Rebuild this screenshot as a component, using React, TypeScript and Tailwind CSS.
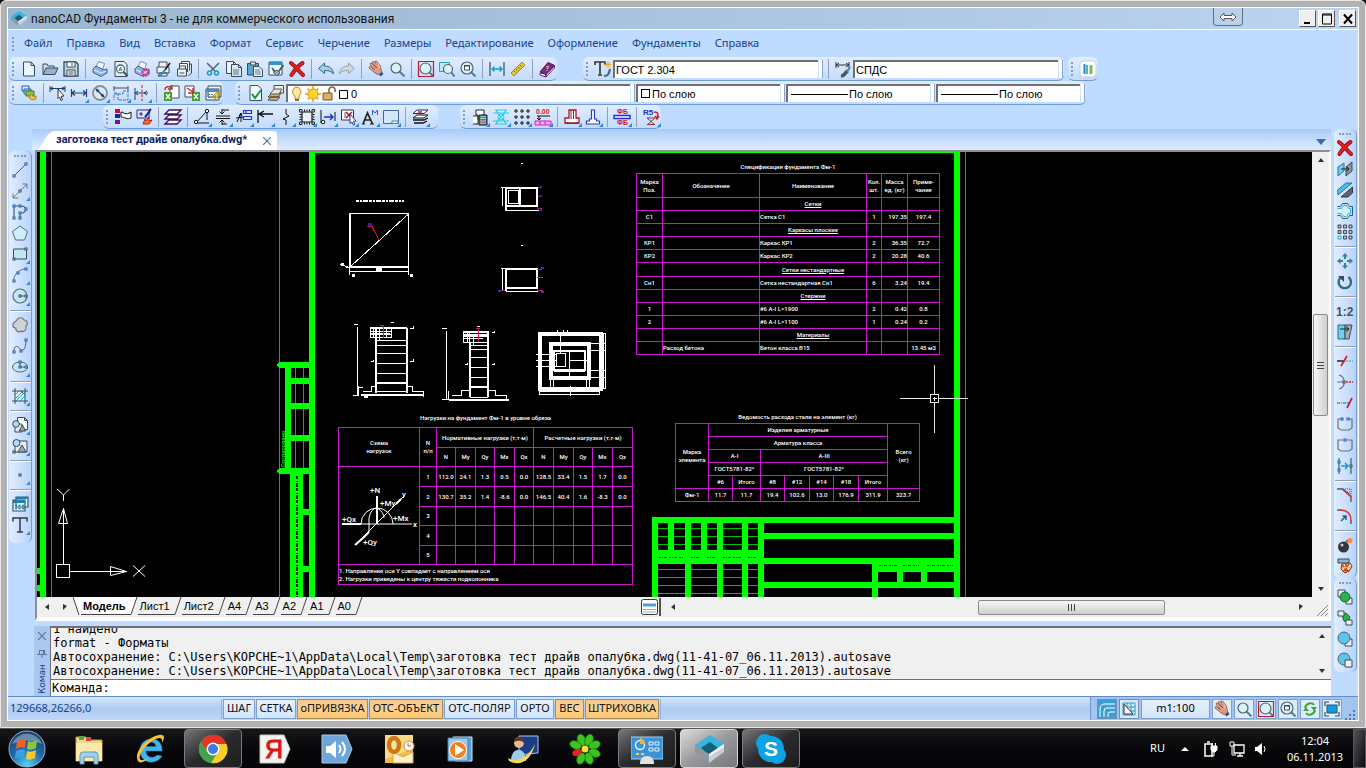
import { useState } from 'react'
import type { ReactNode } from 'react'
import clsx from 'clsx'

const INK = '#3d4a58'
const SKY = '#a9e0f2'
const BLUE = '#1c5fb0'

const Lens = ({ x = 7, y = 7, r = 5 }: { x?: number; y?: number; r?: number }) => (
  <>
    <path d={`M${x + r * 0.7} ${y + r * 0.7} L15.5 15.5`} stroke="#4c7f93" strokeWidth="2" />
    <circle cx={x} cy={y} r={r} fill="#d9f1f7" stroke="#52656e" strokeWidth="1.2" />
  </>
)

const Hand = () => (
  <>
    <path d="M3 3l5 5M5.500 1.500l5 5M8 1l4 5M2 6.500l5 4" stroke="#7c4432" strokeWidth="2.600" strokeLinecap="round" />
    <path d="M6 8l5-3 2 2 1 5-2 2-4-1z" fill="#d99a80" stroke="#7c4432" strokeWidth=".6" />
    <path d="M3 3l5 5M5.500 1.500l5 5M8 1l4 5M2 6.500l5 4" stroke="#e8b49d" strokeWidth="1.500" strokeLinecap="round" />
    <path d="M11 13l3-2 1.500 2-3 2.500z" fill="#1d54b4" />
  </>
)

const Node = ({ x, y, c = BLUE }: { x: number; y: number; c?: string }) => (
  <rect x={x - 1} y={y - 1} width="2" height="2" fill="#fff" stroke={c} />
)

const Page = ({ x = 0, y = 0, fill = '#fff' }: { x?: number; y?: number; fill?: string }) => (
  <path transform={`translate(${x} ${y})`} d="M0 0h7l3 3v9H0zM7 0v3h3" fill={fill} stroke={INK} />
)

const Printer = () => (
  <>
    <path d="M4 6l2.500-5.500 6 2-2 6z" fill="#fff" stroke="#4274b8" strokeWidth=".8" />
    <path d="M1 8l3-3 8 4 3-1v4l-6 3.500-8-4z" fill="#8fb4e0" stroke="#24477e" strokeWidth=".8" />
    <path d="M2 9l7 3 5-2" stroke="#e6f0ff" />
  </>
)

// label and drawing of every tool, on a 16x16 grid
const icons: Record<string, [string, ReactNode]> = {
  new: ['Создать', <path d="M2.500 1h7.500l3.500 3.500V15h-11zM10 1v3.500h3.500" fill="#e9f6fb" stroke={INK} />],
  open: ['Открыть', <><path d="M1 13V3h4l1 2h6v2" fill="#cfe3ee" stroke={INK} /><path d="M1 13.500L4 7h12l-3 6.500z" fill="#8fb3c7" stroke={INK} /></>],
  save: ['Сохранить', <><path d="M1 1h12l2 2v12H1z" fill="#b9d6e6" stroke={INK} strokeWidth="1.300" /><path d="M4 1h8v5H4z" fill="#fff" stroke={INK} /><path d="M4 9h8v6H4z" fill="#fff" stroke={INK} /><path d="M9 2v3M5.500 11h5M5.500 13h5" stroke={INK} /></>],
  print: ['Печать', <Printer />],
  preview: ['Просмотр', <><path d="M2 .5h9l3 3v12H2z" fill="#e4eff2" stroke={INK} /><circle cx="7.500" cy="8" r="4" fill="#fff" stroke="#4d6973" strokeWidth="1.300" /><path d="M10.500 11l4 4" stroke={INK} strokeWidth="1.800" /><path d="M6 10l1.500-4L9 10M6.500 9h2" stroke="#1d7a6d" strokeWidth=".9" /></>],
  plotset: ['Параметры печати', <><Printer /><circle cx="11.500" cy="11.500" r="3" fill="none" stroke="#cf2f7e" strokeWidth="2.400" strokeDasharray="2 .8" /></>],
  plotstyle: ['Стили печати', <><path d="M4 6V1h8v5M2 6h12v6H2zM5 12h7v3H3z" fill="#eef2f4" stroke={INK} /><path d="M4 15c3 0 3-3 6-6" stroke="#2b8fc9" strokeWidth="2" /><path d="M10 9l5-7" stroke="#222" strokeWidth="1.600" /></>],
  publish: ['Публикация', <><path d="M5.500 4V.5h8v9" fill="#fff" stroke={INK} /><path d="M3.500 6V2.500h8V11" fill="#fff" stroke={INK} /><path d="M1.500 8h9v7h-9zM3.500 8V5h6v3M3.500 12h5" fill="#eef2f4" stroke={INK} /><path d="M13.500 3h2v9l-3 3" stroke={INK} /></>],
  cut: ['Вырезать', <><path d="M2 2l8 8M14 2L6 10" stroke="#56626d" strokeWidth="1.600" /><circle cx="4.500" cy="12" r="2" fill="none" stroke="#1997c6" strokeWidth="1.500" /><circle cx="11.500" cy="12" r="2" fill="none" stroke="#1997c6" strokeWidth="1.500" /></>],
  copy: ['Копировать', <><Page x={0.5} y={0.5} fill="#e8f3f8" /><Page x={5.5} y={3.5} fill="#d2e7f0" /><path d="M7 9h6M7 11h6M7 13h6" stroke="#5e7b8b" /></>],
  paste: ['Вставить', <><path d="M.5 2.500h11V14H.5z" fill="#57a8d0" stroke="#2d5268" /><path d="M3.500 1h5v3h-5z" fill="#e8e8e8" stroke={INK} /><path d="M6.500 5.500H12L15.500 9v6.500h-9z" fill="#e9f6fb" stroke={INK} /><path d="M8 9h5M8 11h6M8 13h6" stroke="#5e7b8b" /></>],
  matchprop: ['Копировать свойства', <><path d="M1 1h13v13H1z" fill="#f8fcff" stroke={INK} /><path d="M1 1h13v3H1z" fill="#2696d2" /><path d="M4 7l3 4 4-1 4.500-6" fill="none" stroke="#46545e" strokeWidth="1.800" /><path d="M5 11l4 4 3-3-3-3z" fill="#8fa6b3" stroke={INK} strokeWidth=".7" /></>],
  erase: ['Удалить', <><path d="M2 2c4 3 8 8 12 12M13.500 2C9 5 5 10 2.500 14" stroke="#8d0c0c" strokeWidth="4" strokeLinecap="round" /><path d="M2 2c4 3 8 8 12 12M13.500 2C9 5 5 10 2.500 14" stroke="#e11d1d" strokeWidth="2.600" strokeLinecap="round" /></>],
  undo: ['Отменить', <path d="M.5 7.500L6.500 2v3c5 0 8.500 2.500 9 8-2-3-5-3.500-9-3.500v3z" fill="#9ed0e8" stroke="#3c6379" />],
  redo: ['Повторить', <path d="M15.500 7.500L9.500 2v3c-5 0-8.500 2.500-9 8 2-3 5-3.500 9-3.500v3z" fill="#d2d8dd" stroke="#98a3ad" />],
  pan: ['Панорамирование', <Hand />],
  zoom: ['Зуммирование', <Lens />],
  zoomall: ['Показать всё', <><Lens x={7.5} y={7.5} r={5.5} /><path d="M.5.5h15v15H.5z" fill="none" stroke="#c01c28" strokeWidth="1.200" /></>],
  zoomwin: ['Показать рамкой', <><path d="M.5 1.500h10v9H.5z" fill="#bfe6f3" stroke="#2aa0c8" /><Lens x={9} y={8} r={4.5} /></>],
  zoomobj: ['Показать объект', <><Lens x={7} y={7} r={6} /><path d="M4.500 5h5v4h-5zM4 4.500h6" fill="#fff" stroke={INK} /></>],
  dist: ['Расстояние', <><path d="M1 1v14M15 1v14" stroke={INK} strokeWidth="1.200" /><path d="M3 8h10M5.500 5.500L3 8l2.500 2.500M10.500 5.500L13 8l-2.500 2.500" fill="none" stroke="#1b94d1" strokeWidth="1.300" /></>],
  ruler: ['Линейка', <><path d="M1 12L12 1l3 3L4 15z" fill="#e6c53e" stroke="#a98a1c" /><path d="M4 10l1.500 1.500M6 8l1.500 1.500M8 6l1.500 1.500M10 4l1.500 1.500" stroke="#7a6310" /></>],
  book: ['Справка', <><path d="M1 12v2l6 2v-3zM7 13v3l8.500-9V5z" fill="#f3e9f6" stroke="#471257" strokeWidth=".8" /><path d="M1 11L9 1.500l6.500 3L7 13.500z" fill="#7b2796" stroke="#471257" /><text x="6.500" y="10" fontSize="7" fontWeight="bold" fill="#f7cf38">?</text></>],
  textstyle: ['Стиль текста', <><path d="M0 4V1h10v3M5 1v12M3 14h4" fill="none" stroke="#333" strokeWidth="1.600" /><path d="M13 0v7M9.500 3.500h7M10.500 1l5 5M15.500 1l-5 5" stroke="#f0a020" strokeWidth=".9" /><path d="M9 15c4 0 5-2 6-7" stroke="#46687c" strokeWidth="2.200" fill="none" /></>],
  dimstyle: ['Стиль размеров', <><path d="M1 1v6M14 1v6M1 4h13M4 2L1 4l3 2M11 2l3 2-3 2" fill="none" stroke="#333" /><path d="M6 15c4 0 4-4 7-5" stroke="#4b5459" strokeWidth="3.500" fill="none" /><path d="M12 11l3-5" stroke="#2b8fd0" strokeWidth="2" /></>],
  palette: ['Палитра', <><rect x="0" y="0" width="16" height="16" rx="3" fill="#fff" stroke="#c3ced9" /><path d="M3.500 3.500l2-1v11l-2-1z" fill="#1d86c8" /><path d="M7 4v9" stroke="#57b6b2" strokeWidth="2" /><path d="M9.500 3.500l3 1v8l-3 1z" fill="#76bd4b" /></>],
  layers: ['Слои', <><path d="M1 1h7v5H1zM3 4h7v5H3z" fill="#dceeff" stroke={BLUE} /><path d="M5 6h8v5H5z" fill="#8bc53f" stroke="#3c7a14" /><path d="M10 9l3 3 2-1v3l-4 1-3-2z" fill="#f2c63b" stroke="#94700e" strokeWidth=".7" /></>],
  dimsel: ['Выбор размера', <><path d="M0 1v6M15 1v6M0 3.500h15M3 2L0 3.500 3 5M12 2l3 1.500L12 5" fill="none" stroke="#1d3f74" /><path d="M8 4l6 7-3 .3 1.500 3.500-1.500.7-1.500-3.500-1.500 1.500z" fill="#fff" stroke="#222" strokeWidth=".9" /></>],
  dimlin: ['Линейный размер', <path d="M.5 4v8M15.500 4v8M1 8h14M4 5.500L1 8l3 2.500M12 5.500L15 8l-3 2.500" fill="none" stroke="#1d3f74" strokeWidth="1.200" />],
  dimdia: ['Диаметр', <><circle cx="8" cy="8" r="7" fill="#dfe9f2" stroke="#858f98" strokeWidth="1.800" /><path d="M4 4l8 8" stroke="#1d3f74" strokeWidth="1.200" /><path d="M3.500 3.500l4 1.500-2.500 2.500zM12.500 12.500l-4-1.500 2.500-2.500z" fill="#1d3f74" /></>],
  dimbase: ['Базовый размер', <><path d="M1 1v5M15 1v5M1 3h14" stroke={INK} /><path d="M1 8h4v7h10V6h-5v3H1v6" fill="none" stroke="#3b78ba" strokeDasharray="3 1" /></>],
  dimchain: ['Размерная цепь', <><path d="M1 3v12M1 8h13M4 6L1 8l3 2M13 6l-3 2 3 2" fill="none" stroke="#1d3f74" /><path d="M8 0v16" stroke="#b8252b" strokeDasharray="3 1.500" /></>],
  xlsout: ['Экспорт в Excel', <><path d="M7 1h9v12H7z" fill="#fff" stroke={INK} /><path d="M1 7h8v9H1z" fill="#4d9b34" /><path d="M3 9l4 5M7 9l-4 5" stroke="#fff" strokeWidth="1.300" /><path d="M2 5c0-4 4-4 7-2M9 0v4H5" fill="none" stroke="#c0302c" strokeWidth="1.300" /></>],
  xlsin: ['Импорт из Excel', <><path d="M1 1h9v11H1z" fill="#fff" stroke={INK} /><path d="M8 7h8v9H8z" fill="#4d9b34" /><path d="M10 9l4 5M14 9l-4 5" stroke="#fff" strokeWidth="1.300" /><path d="M3 3l6 4M9 3v5H4" fill="none" stroke="#c0302c" strokeWidth="1.400" /></>],
  tableopt: ['Свойства таблицы', <><path d="M3 1h13v11H3zM1 4h13v11H1z" fill="#eaf5fc" stroke={INK} /><path d="M1 4h13v3H1z" fill="#4690c0" /><path d="M3 9.500h9M3 12.500h9" stroke="#5e7b8b" strokeDasharray="2 1" /><path d="M12 7l-4 4h3l-2 4 6-5h-3l2-3z" fill="#f9d71e" stroke="#a1850b" strokeWidth=".6" /></>],
  check: ['Проверка', <><path d="M3 .5h8L14.500 4v11.500H3z" fill="#f3f8fa" stroke={INK} /><path d="M5 9l3 4 6-8" fill="none" stroke="#15924a" strokeWidth="2" /></>],
  layerlist: ['Менеджер слоёв', <><path d="M6 .5h9.500V8H6z" fill="#f5efe0" stroke={INK} /><path d="M0 12l4-4h9l-3 4zM0 15l3-3h9l-3 3.500z" fill="#cbb083" stroke="#4c3f28" strokeWidth=".9" /><path d="M2 9l4-5h8l-3 5z" fill="#e8e3d7" stroke={INK} strokeWidth=".9" /></>],
  found: ['Фундамент', <><path d="M0 0h5v4H0z" fill="#e00b0b" /><path d="M0 5h5v4H0z" fill="#1421c2" /><path d="M0 11h5v4H0z" fill="#611f8d" /><path d="M6 3c3 0 4 4 10 0v6c-4 2-6-1-10-1z" fill="#fff" stroke="#111" /></>],
  edit: ['Редактировать', <><path d="M1 1h12v8H1zM4 4h2v2H4z" fill="#e9e9e9" stroke="#1b24a0" /><path d="M13 2l2-2M9 8l5-6" stroke="#1b24a0" strokeWidth="2" /><path d="M7 15l2-5 1 2 3-4v4l3-1-3 4z" fill="#f97316" stroke="#b91c1c" /></>],
  bricks: ['Слои грунта', <path d="M4 1h12l-4 4H0zM4 6h12l-4 4H0zM4 11h12l-4 4H0z" fill="#fff" stroke="#401259" strokeWidth="1.400" />],
  angle: ['Уклон', <><path d="M1 14h14M2 14L12 3M13 2v9" stroke="#111" fill="none" /><circle cx="13" cy="2" r="1.700" fill="#fff" stroke="#111" /><circle cx="2" cy="13" r="1.700" fill="#fff" stroke="#111" /></>],
  level: ['Отметка уровня', <path d="M1 7h14M1 9.500h14M7 0v5M4.500 2.500L7 5l2.500-2.500M7 16v-5M4.500 13.500L7 11l2.500 2.500M7 1h7M7 15h5" fill="none" stroke="#111" />],
  leader: ['Выноска', <><path d="M1 13L5 4v9M3 7l2-3 1 3M0 9l8-1" fill="none" stroke="#111" /><path d="M7.500 1.500h8v3h-8zM7.500 7.500h8v3h-8zM10 1v3" stroke="#2333cf" strokeWidth="1.200" /></>],
  arrow: ['Стрелка', <path d="M1 1v13M2 5h14M7 2L2 5l5 3" fill="none" stroke="#111" strokeWidth="1.300" />],
  breakln: ['Обрыв', <path d="M8 0v5l3 2-6 3 3 1v5" fill="none" stroke="#111" />],
  hatched: ['Область', <><path d="M3 3h10v10H3z" fill="#e9f1fb" stroke="#111" strokeWidth="1.200" /><path d="M1.500 0v16M14.500 0v16M0 1.500h16M0 14.500h16" stroke="#111" strokeWidth="2" strokeDasharray="1 1.500" /></>],
  dimtgt: ['Привязка', <><path d="M1 1v13M15 3v9" stroke="#111" /><circle cx="3" cy="13" r="1.800" fill="#fff" stroke="#111" /><path d="M4 8h9M10 5l3 3-3 3" fill="none" stroke="#1c2bd0" strokeWidth="1.300" /></>],
  cross: ['Исключить', <><path d="M.5 1h12v10H.5z" fill="#fff" stroke="#333" /><path d="M3 3h2v6H3z" fill="#a8b4bf" /><path d="M5 3l6 6M11 3L5 9" stroke="#c01818" strokeWidth="1.500" /><path d="M9 5l6 7-2.500.3 1.300 3-1.400.7L11 13l-2 1.500z" fill="#fff" stroke="#1b2a9a" strokeWidth=".9" /></>],
  textm: ['Текст', <><path d="M1 15L5.500 4l5 11M2.500 11h6" fill="none" stroke="#222" strokeWidth="1.700" /><path d="M0 15h3M8 15h4" stroke="#222" /><path d="M10.500 6V1l2.500 3 2.500-3v5" fill="none" stroke="#2c5bd1" /></>],
  frame: ['Рамка', <><path d="M.5 1.500h15v13H.5z" fill="#d3e7fb" stroke="#476a8c" /><path d="M9 12h6v2.500H9z" fill="#fff" stroke="#2a94c4" /></>],
  stack: ['Стопка', <><path d="M5 6h11l-4 3H1z" fill="#fff" stroke="#111" /><path d="M5 1h11l-4 3.500H1z" fill="#fff" stroke="#34207a" /><path d="M6 2l4 2M10 2L6 4" stroke="#c2264a" /><path d="M1 11h11l4-2M2 14h9l4-2" fill="none" stroke="#111" strokeWidth="1.300" /></>],
  calc: ['Расчёт', <><path d="M4 1h8v5h-2v4H6V6H4zM1 7h5v8H1" fill="#fff" stroke="#222" /><path d="M7 6h8v10H7z" fill="#6b747c" stroke="#222" /><path d="M8.500 9.500h6M8.500 12h6M8.500 14.300h6" stroke="#fff" strokeDasharray="1.200 .8" /><path d="M8.500 7.500h5" stroke="#74e0e8" /></>],
  section: ['Разрез', <><path d="M0 4h16M0 12h16M3 1l2 4 6 6 2 4M13 1l-2 4-6 6-2 4M2 1h12M2 15h12" fill="none" stroke="#27cfe0" strokeWidth="1.200" /><circle cx="8" cy="8" r="3" stroke="#27cfe0" /></>],
  dots: ['Свайное поле', <path d="M1 1h2v2H1zM7 1h2v2H7zM13 1h2v2h-2zM1 7h2v2H1zM7 7h2v2H7zM13 7h2v2h-2zM1 13h2v2H1zM7 13h2v2H7zM13 13h2v2h-2z" fill="#fff" stroke="#111" />],
  zero: ['Нулевая отметка', <><text x="1" y="5" fontSize="7" fontWeight="bold" fill="#d11a2a" fontFamily="Liberation Sans">0.00</text><path d="M2 7h13M4 7v4M2 9l2 2 2-2" fill="none" stroke="#111" /><path d="M0 12h16v4H0zM5 12v4M10 12v4" fill="#f7b0f0" stroke="#e312cf" /></>],
  base1: ['Столбчатый фундамент', <><path d="M5 1h7v8h3v5H1V9h4z" fill="#fff" stroke="#b01224" strokeWidth="1.300" /><path d="M7 1v9M9.500 1v9" stroke="#b01224" /><path d="M1 14.500h14" stroke="#1f3fc4" /></>],
  base2: ['Ленточный фундамент', <path d="M6.500 1h3v9h2v2h3v3h-13v-3h3v-2h2z" fill="#fff" stroke="#1f3fc4" strokeWidth="1.200" />],
  fb: ['Фундаментный блок', <><path d="M0 6.500h16v3H0z" fill="#fff" stroke="#1c2fd0" strokeWidth="1.400" /><text x="3" y="5" fontSize="7" fontWeight="bold" fill="#d11a2a" fontFamily="Liberation Sans">ФБ</text><text x="3" y="16" fontSize="7" fontWeight="bold" fill="#d11a2a" fontFamily="Liberation Sans">ФБ</text></>],
  rs: ['Пересчёт', <><text x="0" y="6" fontSize="8" fontWeight="bold" fill="#1c2fd0" fontFamily="Liberation Sans">R5</text><path d="M11 3c5 0 4 3 3 6M12 7l2 3 2-3" fill="none" stroke="#d11a2a" strokeWidth="1.400" /><path d="M4 9l8 7M12 9l-8 7M4 9h8M4 15.500h8" stroke="#843a3a" /></>],
  line: ['Отрезок', <><path d="M2 14L14 2" stroke="#4a5b6c" /><Node x={14} y={2} /><Node x={2} y={14} /></>],
  ray: ['Луч', <><path d="M1 15L15 1M10.500 1H15v4.500M1 10.500V15h5.500" fill="none" stroke="#6c7781" /><Node x={8} y={8} c={INK} /></>],
  pline: ['Полилиния', <><path d="M2 14V2h7c6 0 6 7 0 7H8v5" fill="none" stroke="#4a5b6c" strokeWidth="1.200" /><Node x={2} y={2} /><Node x={8} y={2} /><Node x={14} y={5} /><Node x={8} y={9} /><Node x={2} y={14} /><Node x={8} y={14} /></>],
  polygon: ['Многоугольник', <path d="M8 1l7.500 5.500L12.500 15h-9L.5 6.500z" fill="#cdeefa" stroke="#5d6970" />],
  rect: ['Прямоугольник', <><path d="M1.500 3h13v10h-13z" fill="#bfe6f5" stroke="#3d4a58" /><Node x={14} y={3} c={INK} /><Node x={2} y={13} c={INK} /></>],
  arc: ['Дуга', <><path d="M1.500 14C2 7 7 2 14 2" fill="none" stroke="#68737c" /><Node x={14} y={2} /><Node x={6} y={6} /><Node x={2} y={14} /></>],
  circle: ['Окружность', <><circle cx="8" cy="8" r="7" fill="#c2e8f5" stroke="#59656e" strokeWidth="1.200" /><path d="M8 8h7" stroke={BLUE} /><Node x={8} y={8} c={INK} /><Node x={14} y={8} c={INK} /></>],
  cloud: ['Облако', <path d="M5 3c1-3 6-3 7 0 4 0 4 5 2 6 1 4-3 7-5 5-2 2-6 0-5-3-4 0-4-5-1-6z" fill="#cdd2d6" stroke="#73797e" strokeWidth="1.200" />],
  spline: ['Сплайн', <><path d="M2 14c0-9 5-5 7-2 4 2 5-6 5-10" fill="none" stroke="#4a5b6c" /><Node x={2} y={14} /><Node x={9} y={13} /><Node x={14} y={2} /></>],
  ellipse: ['Эллипс', <><ellipse cx="8" cy="8" rx="7.500" ry="5" fill="#c2e8f5" stroke="#59656e" /><path d="M8 3v5h7" fill="none" stroke={BLUE} /><Node x={8} y={8} c={INK} /><Node x={14} y={8} /><Node x={8} y={3} /></>],
  hatch: ['Штриховка', <><path d="M3 3h10v10H3z" fill="#d8f4fb" /><path d="M3 7l4-4M3 11l8-8M4 13l9-9M8 13l5-5" stroke="#29b2d4" /><path d="M0 3h16M0 13h16M3 0v16M13 0v16M9 3l4 4" fill="none" stroke={INK} /></>],
  block: ['Создать блок', <><Page x={5.5} y={0.5} fill="#fff" /><path d="M3 7h7v8H3z" fill="#e8eef2" stroke={INK} /><circle cx="4" cy="7" r="3.300" fill={SKY} stroke={INK} /><path d="M7 14l3.500-6 3 6z" fill="#9aa8b2" stroke={INK} /></>],
  insert: ['Вставить блок', <><path d="M3 3h12v11H3z" fill="#e8eef2" stroke={INK} /><circle cx="4.500" cy="5" r="3.500" fill={SKY} stroke={INK} /><path d="M6 14l4-7 4 7z" fill="#9aa8b2" stroke={INK} /><Node x={2} y={14} c={INK} /></>],
  point: ['Точка', <Node x={8} y={8} c={INK} />],
  table: ['Таблица', <><path d="M4 1h12v10H4zM1 4h12v11H1z" fill="#eaf5fc" stroke="#27586e" strokeWidth="1.200" /><path d="M1 4h12v3H1zM4 1h12v2H4z" fill="#1d7fb0" /><path d="M3 9.500h9M3 12.500h9" stroke="#1d7fb0" strokeWidth="1.500" strokeDasharray="2 1.500" /></>],
  mtext: ['Многострочный текст', <path d="M1 4.500V1h14v3.500M8 1v14M5 15h6" fill="none" stroke="#333a40" strokeWidth="1.500" />],
  mirror: ['Зеркало', <><path d="M1 6l6-4v8l-6 5z" fill="#6fcdec" stroke="#2a7796" /><path d="M9 6l6-5v9l-6 5z" fill="#8b949c" stroke={INK} /><path d="M4 8h8M9.500 5.500L12 8l-2.500 2.500" fill="none" stroke="#222" /></>],
  offset: ['Подобие', <><path d="M.5 8L9 1h6L1 13z" fill="#48bfea" stroke="#2a7796" /><path d="M4 15L15.500 5v6L11 15z" fill="#5d646b" stroke="#32383e" /></>],
  contour: ['Контур', <><path d="M.5 3.500h3l2-3h5l2 3h3v9h-3l-2 3h-5l-2-3h-3" fill="none" stroke="#235f7c" /><path d="M.5 5.500h4l2-3h3l2 3h2v5h-2l-2 3h-3l-2-3h-4" fill="#d3f1fb" stroke="#35b1de" /></>],
  array: ['Массив', <><path d="M1 1h3v3H1zM6.500 1h3v3h-3zM12 1h3v3h-3zM1 6.500h3v3H1zM6.500 6.500h3v3h-3zM12 6.500h3v3h-3zM6.500 12h3v3h-3zM12 12h3v3h-3z" fill="#b9bfc4" stroke={INK} /><path d="M1 12h3v3H1z" fill="#fff" stroke="#1ba5d8" /></>],
  move: ['Переместить', <path d="M8 0l3 3.500H9V6H7V3.500H5zM8 16l3-3.500H9V10H7v2.500H5zM0 8l3.500-3v2H6v2H3.500v2zM16 8l-3.500-3v2H10v2h2.500v2z" fill="#3a809f" />],
  rotate: ['Повернуть', <><path d="M3.500 3.500a6.200 6.200 0 1 0 8-.5" fill="none" stroke="#2d6c86" strokeWidth="2.400" /><path d="M1 2h6v6z" fill="#3d4a58" /></>],
  scale: ['Масштаб', <text x="-1" y="13" fontSize="12" fontWeight="bold" fill="#44525f" fontFamily="Liberation Sans">1:2</text>],
  stretch: ['Растянуть', <><path d="M1 1h7v14H1z" fill="#6fd0ee" stroke="#256a85" /><path d="M8 1h7l-3 14H8z" fill="#a3abb2" stroke={INK} /><path d="M3 5h9M9 2.500L12 5 9 7.500" fill="none" stroke="#222" /></>],
  trim: ['Обрезать', <><path d="M0 8h8" stroke="#222" strokeWidth="1.500" /><path d="M9 8h7" stroke="#2d9bc4" strokeDasharray="2 1" /><path d="M4 13l6-10" stroke="#cf1d2b" strokeWidth="1.700" /></>],
  extend: ['Удлинить', <><path d="M2 1c7 2 7 12 0 14M0 8h7" fill="none" stroke="#68737c" strokeWidth="1.200" /><path d="M9 8h7" stroke="#cf1d2b" strokeDasharray="2 1" strokeWidth="1.400" /><Node x={7} y={8} c={INK} /></>],
  lengthen: ['Увеличить', <><path d="M0 8h5M6 8h6" stroke="#1da5bd" strokeDasharray="3 1" strokeWidth="1.400" /><path d="M10 13l5-10" stroke="#cf1d2b" strokeWidth="1.700" /></>],
  break1: ['Разорвать', <><path d="M4 3H1v9l3 2h8l3-2V3h-3" fill="none" stroke="#68737c" strokeWidth="1.200" /><Node x={5} y={3} /><Node x={11} y={3} /></>],
  break2: ['Разорвать в точке', <><path d="M6 3H1v9l3 2h8l3-2V3h-5" fill="none" stroke="#68737c" strokeWidth="1.200" /><Node x={8} y={3} /></>],
  join: ['Соединить', <><path d="M2 0v16M14 0v16" stroke="#35667b" strokeWidth="1.200" /><path d="M4 8h7M8 5l3 3-3 3" fill="none" stroke="#1b9ad0" strokeWidth="1.500" /><Node x={2} y={4} /><Node x={2} y={12} /><Node x={14} y={8} c={INK} /></>],
  chamfer: ['Фаска', <><path d="M0 2h6l8 7v6" fill="none" stroke="#35667b" strokeWidth="1.400" /><path d="M5 2l9 8" stroke="#d33" strokeWidth="1.200" /><path d="M8 2h6v6M10 5h4" fill="none" stroke="#444" strokeDasharray="1 1" /></>],
  fillet: ['Сопряжение', <><path d="M0 2h4M14 12v4" stroke="#35667b" strokeWidth="1.400" /><path d="M3 2c7 0 11 4 11 11" fill="none" stroke="#d33" strokeWidth="1.400" /><path d="M4 13l5-5M5.500 8H9v4" fill="none" stroke="#1d5f9c" strokeWidth="1.500" /></>],
  bomb: ['Расчленить', <><circle cx="6.500" cy="10" r="5.500" fill="#33373b" /><path d="M9 5l4-3" stroke="#555" strokeWidth="2" /><circle cx="13" cy="3.500" r="2.600" fill="#ff8c3a" /><circle cx="5" cy="8" r="1.500" fill="#cbd2d8" /></>],
  purge: ['Очистить', <><path d="M1 1h11v4H1z" fill="#8fb6cf" stroke={INK} /><path d="M5 6l8-1 2 3-2 4-5 3-4-4z" fill="#f2e6da" stroke="#6d3212" /><path d="M5 7l7 7M12 6l-6 8M9 5v10" stroke="#d43a1a" strokeWidth="1.500" /><path d="M5 10l9-1" stroke="#f4b63e" strokeWidth="1.500" /></>],
  front: ['На передний план', <><path d="M1 1h7v7H1zM9 9h6v6H9z" fill="#eef1f3" stroke={INK} /><circle cx="8" cy="8" r="5" fill="#2bb04a" stroke="#176b2b" /></>],
  back: ['На задний план', <><path d="M5 5l4-2 4 4-2 5-4-1z" fill="#2bb04a" stroke="#176b2b" /><path d="M1 1h6v5H1zM9 10h6v5H9z" fill="#eef1f3" stroke={INK} /></>],
  above: ['Перед объектом', <><path d="M8 8h7v7H8z" fill="#eef1f3" stroke={INK} /><circle cx="7" cy="7" r="6" fill="#5fc3ea" stroke="#4a6575" /></>],
  below: ['За объектом', <><circle cx="7" cy="7" r="6" fill="#5fc3ea" stroke="#4a6575" /><path d="M8 8h7v7H8z" fill="#eef1f3" stroke={INK} /></>],
  regen: ['Обновить', <><path d="M3 7c1-5 7-6 9-3M13 9c-1 5-7 6-9 3" fill="none" stroke="#3aa83f" strokeWidth="2" /><path d="M9 6h6l-3 4zM1 10h6L4 6z" fill="#3aa83f" /></>],
  screen: ['Во весь экран', <><path d="M1 5V1h4M11 1h4v4M15 11v4h-4M5 15H1v-4" fill="none" stroke={INK} strokeWidth="1.200" /><path d="M3 4h10v8H3z" fill="#1998d8" stroke="#0e5f8b" /></>],
}

const Tool = ({ name, small }: { name: string; small?: boolean }) => {
  const drop = name.endsWith('*')
  const [label, art] = icons[name.replace('*', '')]
  return (
    <button
      aria-label={label}
      className={clsx('flex shrink-0 items-center justify-center hover:bg-[#ffe7a2]', small ? 'h-4 w-4' : 'h-[21px] w-[21px]')}
    >
      <svg viewBox="0 0 20 20" className="h-5 w-5 shrink-0" fill="none">
        <g transform="translate(2 2)">{art}</g>
        {drop && <path d="M20 16v4h-4z" fill="#2f86e0" />}
      </svg>
    </button>
  )
}

const Tools = ({ names, column }: { names: string; column?: boolean }) => (
  <>
    {names.split(' ').map((name, i) =>
      name === '|' ? (
        <span
          key={i}
          className={clsx('shrink-0 border-[#8f9fb5]', column ? 'mt-1 mb-0.5 h-0.5 w-[21px] border-t bg-white' : 'mr-[3px] ml-1 h-5 w-px border-l')}
        />
      ) : (
        <Tool key={i} name={name} />
      ),
    )}
  </>
)

const Handle = ({ column }: { column?: boolean }) =>
  column ? (
    <span className="mt-1 mb-0.5 h-0.5 w-3 shrink-0 border-t-2 border-dotted border-[#7d9cc7]" />
  ) : (
    <span className="mr-1 ml-[3px] h-3.5 w-0.5 shrink-0 border-l-2 border-dotted border-[#7d9cc7]" />
  )

const Bar = ({ children, className }: { children: ReactNode; className?: string }) => (
  <div
    role="toolbar"
    className={clsx('flex h-6 shrink-0 items-center rounded-md border-b border-[#6f9dd9] bg-linear-to-b from-[#e1edff] to-[#c3dbfb]', className)}
  >
    <Handle />
    {children}
  </div>
)

const Combo = ({ label, value, width, before }: { label: string; value: string; width: string; before?: ReactNode }) => (
  <>
    <label className={clsx('flex h-[18px] shrink-0 items-center border-t-2 border-l-2 border-[#6e7074] bg-white pl-px', width)}>
      {before}
      <select
        aria-label={label}
        className="min-w-0 flex-1 appearance-none bg-transparent pt-px font-['Liberation_Sans'] text-[11px] text-black outline-none"
      >
        <option>{value}</option>
      </select>
    </label>
    <span className="mx-px h-[18px] w-1 shrink-0 border-r border-[#8da5c8] bg-white" />
  </>
)

const LineSample = () => (
  <svg className="mr-px ml-0.5 h-3 w-[57px] shrink-0" viewBox="0 0 57 12">
    <path d="M0 6h57v1H0z" fill="#000" />
  </svg>
)

const CubeArt = () => (
  <>
    <path d="M2 12L17 2l14 9-6 4-8-5-9 6z" fill="#35b5e0" />
    <path d="M8 15l9-6 8 6-9 7z" fill="#165f7d" />
    <path d="M2 12l14 9v9L2 19z" fill="#8f989f" />
    <path d="M31 11l-15 10v9l15-11z" fill="#c9ced2" />
    <path d="M25 15l6-4v3L16 24v-3z" fill="#eceff1" />
  </>
)

const menu = ['Файл', 'Правка', 'Вид', 'Вставка', 'Формат', 'Сервис', 'Черчение', 'Размеры', 'Редактирование', 'Оформление', 'Фундаменты', 'Справка']

const winButton = 'flex h-[17px] w-[17px] items-center justify-center border border-t-white border-r-[#555] border-b-[#555] border-l-white bg-[#efefef]'

const TitleBar = () => (
  <header className="flex h-[22px] shrink-0 items-center border-b border-white bg-linear-to-r from-[#9ab5cf] to-[#bcd4ee] pr-0.5">
    <svg viewBox="0 0 32 32" className="mr-1 ml-0.5 h-[17px] w-[17px]"><CubeArt /></svg>
    <h1 className="flex-1 truncate font-['Roboto'] text-xs text-[#111]">nanoCAD Фундаменты 3 - не для коммерческого использования</h1>
    <button aria-label="Переключить экран" className="mr-14 flex h-[18px] w-[30px] items-center justify-center self-start rounded-b border border-t-0 border-[#5f7187]">
      <svg viewBox="0 0 18 10" className="h-2.5 w-[18px]">
        <path d="M1 5l4-4v2.500h8V1l4 4-4 4V6.500H5V9z" fill="#fff" stroke="#555" />
      </svg>
    </button>
    <button aria-label="Свернуть" className={winButton}>
      <svg viewBox="0 0 12 12" className="h-3 w-3"><path d="M2 10h6" stroke="#000" strokeWidth="2" /></svg>
    </button>
    <button aria-label="Развернуть" className={clsx(winButton, 'ml-0.5')}>
      <svg viewBox="0 0 12 12" className="h-3 w-3"><path d="M1.500 1h9v10h-9zM1 2h10" fill="none" stroke="#000" /></svg>
    </button>
    <button aria-label="Закрыть" className={clsx(winButton, 'ml-1')}>
      <svg viewBox="0 0 12 12" className="h-3 w-3"><path d="M2 1.500l8 9M10 1.500l-8 9" stroke="#000" strokeWidth="2" /></svg>
    </button>
  </header>
)

const Ribbon = () => (
  <>
    <nav className="flex h-[27px] shrink-0 items-center gap-3.5 pl-px font-['Noto_Sans'] text-[11px] text-[#15428b]">
      <span className="-mr-1 ml-[3px] h-3.5 w-0.5 border-l-2 border-dotted border-[#7d9cc7]" />
      {menu.map((item) => (
        <button key={item} className="shrink-0">{item}</button>
      ))}
    </nav>
    <div className="flex h-6 shrink-0 pl-px">
      <Bar><Tools names="new open save | print preview plotset plotstyle publish | cut copy paste matchprop erase | undo redo | pan zoom | zoomall zoomwin zoomobj | dist ruler | book" /></Bar>
      <Bar className="ml-[26px]">
        <Tool name="textstyle" />
        <Combo label="Стиль текста" value="ГОСТ 2.304" width="w-[205px]" />
        <Tools names="| dimstyle" />
        <Combo label="Размерный стиль" value="СПДС" width="w-[205px]" />
      </Bar>
      <Bar className="ml-1"><Tool name="palette" /></Bar>
    </div>
    <div className="flex h-6 shrink-0 pl-px">
      <Bar><Tools names="layers | dimsel dimlin* dimdia* dimbase* dimchain* | xlsout xlsin tableopt" /></Bar>
      <Bar className="ml-3">
        <Tools names="check layerlist" />
        <Combo
          label="Слой"
          value="0"
          width="w-[344px]"
          before={
            <svg viewBox="0 0 62 16" className="h-4 w-[62px] shrink-0">
              <path d="M7 1a5 5 0 0 1 3 9v3H6v-3A5 5 0 0 1 7 1z" fill="#fbe9a7" stroke="#b98d2c" />
              <path d="M6 14h4" stroke="#7d6b45" strokeWidth="2" />
              <path d="M24 0v16M16 8h16M18.500 2.500l11 11M29.500 2.500l-11 11" stroke="#e8a218" strokeWidth="1.500" />
              <circle cx="24" cy="8" r="5" fill="#ffd52e" stroke="#d99a10" />
              <path d="M40 7V4a3 3 0 0 1 6 0v2" fill="none" stroke="#8a6a3c" strokeWidth="1.700" />
              <path d="M34 7h9v7h-9z" fill="#d9b06a" stroke="#7a5927" />
              <path d="M50.500 4.500h8v8h-8z" fill="#fff" stroke="#000" />
            </svg>
          }
        />
        <Combo
          label="Цвет"
          value="По слою"
          width="w-[144px]"
          before={<span className="mx-0.5 h-[9px] w-[9px] shrink-0 border border-black" />}
        />
        <Combo label="Тип линии" value="По слою" width="w-[144px]" before={<LineSample />} />
        <Combo label="Толщина линии" value="По слою" width="w-[144px]" before={<LineSample />} />
      </Bar>
    </div>
    <div className="flex h-6 shrink-0 pl-[95px]">
      <Bar className="pr-2"><Tools names="found edit | bricks | angle* level* leader* arrow* breakln* hatched* dimtgt* cross* textm* frame* | stack*" /></Bar>
      <Bar className="ml-[22px]"><Tools names="calc* section* dots* zero* | base1* base2* | fb* | rs*" /></Bar>
    </div>
  </>
)

const cell = 'border border-[#cc18cc] p-0 text-center font-medium whitespace-nowrap'
const sheet = "absolute table-fixed border-collapse font-['Roboto'] text-[6px] font-medium leading-[8px] text-white"

const Cols = ({ widths }: { widths: string[] }) => (
  <colgroup>
    {widths.map((w, i) => (
      <col key={i} className={w} />
    ))}
  </colgroup>
)

const specRows: [string, string, string, string, string, string][] = [
  ['', '', 'Сетки', '', '', ''],
  ['С1', '', 'Сетка С1', '1', '197.35', '197.4'],
  ['', '', 'Каркасы плоские', '', '', ''],
  ['КР1', '', 'Каркас КР1', '2', '36.35', '72.7'],
  ['КР2', '', 'Каркас КР2', '2', '20.28', '40.6'],
  ['', '', 'Сетки нестандартные', '', '', ''],
  ['Сн1', '', 'Сетка нестандартная Сн1', '6', '3.24', '19.4'],
  ['', '', 'Стержни', '', '', ''],
  ['1', '', '#6 А-I L=1900', '2', '0.42', '0.8'],
  ['2', '', '#6 А-I L=1100', '1', '0.24', '0.2'],
  ['', '', 'Материалы', '', '', ''],
  ['', 'Расход бетона', 'Бетон класса В15', '', '', '13.45 м3'],
]

const SpecTable = () => (
  <table className={clsx(sheet, 'top-[9px] left-[599px] w-[303px]')}>
    <caption className="h-3 leading-3">Спецификация фундамента Фм-1</caption>
    <Cols widths={['w-[26px]', 'w-[97px]', 'w-[107px]', 'w-[15px]', 'w-[26px]', 'w-8']} />
    <thead>
      <tr className="h-6">
        <th className={cell}>Марка<br />Поз.</th>
        <th className={cell}>Обозначение</th>
        <th className={cell}>Наименование</th>
        <th className={cell}>Кол.<br />шт.</th>
        <th className={cell}>Масса<br />ед. (кг)</th>
        <th className={cell}>Приме-<br />чание</th>
      </tr>
    </thead>
    <tbody>
      {specRows.map((row, i) => {
        const heading = !row[0] && !row[1]
        return (
          <tr key={i} className={i === 5 ? 'h-3.5' : 'h-[13px]'}>
            {row.map((text, j) => (
              <td
                key={j}
                className={clsx(
                  cell,
                  (j === 1 || (j === 2 && !heading)) && 'text-left',
                  j === 2 && heading && 'underline',
                  j === 4 && 'text-right',
                )}
              >
                {text}
              </td>
            ))}
          </tr>
        )
      })}
    </tbody>
  </table>
)

const loadRows = [
  ['1', '112.0', '24.1', '1.3', '0.5', '0.0', '128.5', '33.4', '1.5', '1.7', '0.0'],
  ['2', '130.7', '35.2', '1.4', '-8.6', '0.0', '146.5', '40.4', '1.6', '-8.3', '0.0'],
  ['3', '', '', '', '', '', '', '', '', '', ''],
  ['4', '', '', '', '', '', '', '', '', '', ''],
  ['5', '', '', '', '', '', '', '', '', '', ''],
]

const LoadScheme = () => (
  <svg viewBox="0 0 80 96" className="h-24 w-20" fill="none" stroke="#fff">
    <path d="M38 28v28M3 56h19" strokeWidth="2" />
    <path d="M22 56h51M16 77l49-49M22 56a16 16 0 0 1 32 0M30 64V50q2-10 8-10M38 40q7 4 7 10" />
    <path d="M30 64l-6 6M16 77l8-7M57 36l5-5" strokeWidth="2" />
    <g fill="#fff" stroke="none" fontSize="8" fontFamily="Roboto">
      <text x="31" y="25">+N</text>
      <text x="63" y="29">y</text>
      <text x="41" y="38">+My</text>
      <text x="54" y="53">+Mx</text>
      <text x="3" y="54">+Qx</text>
      <text x="74" y="59">x</text>
      <text x="24" y="77">+Qy</text>
    </g>
  </svg>
)

const LoadTable = () => (
  <table className={clsx(sheet, 'top-[257px] left-[301px] w-[294px]')}>
    <caption className="h-[18px] leading-[18px]">Нагрузки на фундамент Фм-1 в уровне обреза</caption>
    <Cols widths={['w-[81px]', 'w-[17px]', 'w-[19px]', 'w-5', 'w-[19px]', 'w-5', 'w-[19px]', 'w-5', 'w-5', 'w-[19px]', 'w-5', 'w-5']} />
    <thead>
      <tr className="h-5">
        <th rowSpan={2} className={cell}>Схема<br />нагрузок</th>
        <th rowSpan={2} className={cell}>N<br />п/п</th>
        <th colSpan={5} className={cell}>Нормативные нагрузки (т,т·м)</th>
        <th colSpan={5} className={cell}>Расчетные нагрузки (т,т·м)</th>
      </tr>
      <tr className="h-[19px]">
        {['N', 'My', 'Qy', 'Mx', 'Qx', 'N', 'My', 'Qy', 'Mx', 'Qx'].map((h, i) => (
          <th key={i} className={cell}>{h}</th>
        ))}
      </tr>
    </thead>
    <tbody>
      {loadRows.map((row, i) => (
        <tr key={i} className={i % 2 === 0 && i > 0 ? 'h-[19px]' : 'h-5'}>
          {i === 0 && <td rowSpan={5} className={cell}><LoadScheme /></td>}
          {row.map((text, j) => (
            <td key={j} className={cell}>{text}</td>
          ))}
        </tr>
      ))}
      <tr className="h-5">
        <td colSpan={12} className={clsx(cell, 'text-left')}>
          1. Направление оси Y совпадает с направлением оси<br />
          2. Нагрузки приведены к центру тяжести подколонника
        </td>
      </tr>
    </tbody>
  </table>
)

const SteelTable = () => (
  <table className={clsx(sheet, 'top-[259px] left-[638px] w-[244px]')}>
    <caption className="h-3 leading-3">Ведомость расхода стали на элемент (кг)</caption>
    <Cols widths={['w-[33px]', 'w-6', 'w-7', 'w-6', 'w-[25px]', 'w-6', 'w-[25px]', 'w-[29px]', 'w-8']} />
    <thead>
      <tr className="h-[13px]">
        <th rowSpan={5} className={cell}>Марка<br />элемента</th>
        <th colSpan={7} className={cell}>Изделия арматурные</th>
        <th rowSpan={5} className={cell}>Всего<br />(кг)</th>
      </tr>
      <tr className="h-[13px]"><th colSpan={7} className={cell}>Арматура класса</th></tr>
      <tr className="h-[13px]"><th colSpan={2} className={cell}>А-I</th><th colSpan={5} className={cell}>А-III</th></tr>
      <tr className="h-[13px]"><th colSpan={2} className={cell}>ГОСТ5781-82*</th><th colSpan={5} className={cell}>ГОСТ5781-82*</th></tr>
      <tr className="h-[13px]">
        {['#6', 'Итого', '#8', '#12', '#14', '#18', 'Итого'].map((h, i) => (
          <th key={i} className={cell}>{h}</th>
        ))}
      </tr>
    </thead>
    <tbody>
      <tr className="h-[13px]">
        {['Фм-1', '11.7', '11.7', '19.4', '102.6', '13.0', '176.9', '311.9', '323.7'].map((v, i) => (
          <td key={i} className={cell}>{v}</td>
        ))}
      </tr>
    </tbody>
  </table>
)

const Drawing = () => (
  <svg viewBox="37 152 1275 445" className="absolute top-0 left-0 h-[445px] w-[1275px]" fill="none" shapeRendering="crispEdges">
    {/* sheet borders */}
    <g fill="#00ff00">
      <path d="M40 152h6v445h-6zM37 568h3v6h-3zM37 585h3v6h-3zM309 152h6v445h-6zM954 152h6v445h-6zM309 152h651v1H309z" />
      <path d="M51 152h1v445h-1zM279 152h1v445h-1zM965 152h1v445h-1z" opacity=".75" />
      <path d="M279 362h30v6h-30l-2-3zM285 368h6v100h-6zM291 378h18v6h-18zM291 403h18v6h-18zM291 435h18v6h-18zM279 468h30v6h-30l-2-3zM290 474h13v123h-13zM303 509h6v6h-6zM303 566h6v6h-6z" />
      <path d="M295 368h1v100h-1zM303 368h1v100h-1z" opacity=".75" />
      {/* title block */}
      <path d="M652 517h303v6H652zM652 517h6v80h-6zM668 523h6v27h-6zM685 523h6v74h-6zM701 523h6v27h-6zM717 523h6v74h-6zM742 523h6v74h-6zM758 523h6v74h-6zM652 550h112v14H652z" />
      <path d="M764 533h191v6H764zM764 558h191v6H764zM764 582h191v6H764zM872 564h6v33h-6zM878 564h77v8h-77zM897 572h6v10h-6zM921 572h6v10h-6z" />
      <path d="M658 528h100v1H658zM658 536h100v1H658zM658 544h100v1H658zM658 569h100v1H658zM658 577h100v1H658zM658 585h100v1H658zM658 593h100v1H658z" opacity=".75" />
    </g>
    <path d="M659 557h24M691 557h10M707 557h8M723 557h20M748 557h10M879 565h18M903 565h16M927 565h26" stroke="#003a00" strokeDasharray="2 1 1 1 3 2" />
    <path d="M297 476v121" stroke="#003000" strokeWidth="2" strokeDasharray="3 2 1 1 4 1" />
    <text transform="translate(285 467) rotate(-90)" fontSize="6" fontFamily="Roboto" fontWeight="500" fill="#00ff00">Согласовано</text>

    {/* coordinate axes */}
    <g stroke="#fff">
      <path d="M56.500 564.500h13v13h-13zM63.500 564v-56M70 571.500h57" />
      <path d="M58.500 523.500h9l-4-15zM110.500 566.500v9l16-4zM57 489l6.500 6 6-6M63.500 495v6M133 565.500l12 11M145 565.500l-12 11" shapeRendering="auto" />
    </g>

    {/* mesh */}
    <path d="M356 200.500h48" stroke="#fff" strokeWidth="2" strokeDasharray="3 1 2 1 5 1" />
    <g stroke="#fff">
      <path d="M349.500 213.500h59v54h-59zM350.500 213v54M346 267.500h63M349 271.500h60M349.500 267v8M408.500 267v8M408.500 214L351 266M340 264l8 3" />
      <path d="M349 267h60" strokeWidth="2" />
      <path d="M376 269.500h6M352 275.500h3M410 275.500h3M341 264.500h3" strokeWidth="3" />
    </g>
    <path d="M367 226.500h5l7 13.500" stroke="#d01818" />
    <path d="M368 224.500h4" stroke="#2020d0" strokeWidth="3" />

    {/* frames */}
    <g stroke="#fff">
      <path d="M521 163.500h2M521 245.500h2M502.500 187v19M506.500 187.500h31v19h-31zM508.500 190.500h10v13h-10zM505 210.500h34M502.500 268v22M506.500 269.500h31v18h-31zM506 291.500h32M501 187.500h6M501 268.500h6" />
      <path d="M506 188h32M506 206h32M520 188v18M506 269h32M506 288h32M506 187v23M506 269v22M537 187v20M537 269v20" strokeWidth="2" />
    </g>
    <path d="M538 187.500h4M538 196.500h3M537 208.500h5M537 269.500h5M537 277.500h6M500 290.500h5M537 290.500h6" stroke="#c01860" />
    <path d="M540 186.500h2M540 195.500h2M540 209.500h2M541 267.500h3M498 290.500h3M541 291.500h3" stroke="#3030d0" strokeWidth="2" />

    {/* columns */}
    <g stroke="#fff">
      <path d="M357.500 327v68M354 324.500h4M353 395.500h6M376.500 328v65M406.500 328v65M376 328.500h31M376 340.500h30M376 345.500h30M376 353.500h30M376 363.500h30M376 373.500h30M376 391.500h30" />
      <path d="M370 328.500h21v9h-21zM370 331.500h21M370 334.500h21M373.500 327v11M379.500 328v12M386.500 328v10M359 387.500h4M358.500 386v9M363 391.500h8v-5h6M407 386.500h5v5h11v5M391 322.500h3M410 328.500h3v-3M410 361.500h3v-3M371 361.500h2v-2" />
      <path d="M361 395h62M376 383h30M370 328h37M370 334h20M364 397h4M376 328v65M407 328v65" strokeWidth="2" />
      <path d="M446.500 331v68M442 328.500h5M442 399.500h7M469.500 331v66M488.500 331v66M469 345.500h19M469 349.500h19M469 357.500h19M469 367.500h19M469 377.500h19M470 397.500h18" />
      <path d="M463 331.500h25v11h-25zM463 334.500h25M463 338.500h20M467.500 331v12M473.500 334v11M452 395.500h9v-5h8M488 390.500h7v5h11v4M448.500 391v8M477 326.500h3M492 332.500h2v-2M492 364.500h2v-2M465 364.500h2v-2" />
      <path d="M449 400h60M470 387h18M463 332h25M463 336h25M470 343v54M488 331v66" strokeWidth="2" />
    </g>
    <path d="M380 325.500h4M383.500 326v12M476 328.500h4M478.500 329v13" stroke="#d02050" />

    {/* plan view */}
    <g stroke="#fff">
      <path d="M540 334h61v55h-61zM550.500 344h38v34h-38z" strokeWidth="4" />
      <path d="M554 351h31v19h-31zM554 371h31" strokeWidth="2" />
      <path d="M556.500 353.500h9v13h-9zM560.500 334v20M569.500 352v28M557.500 330v5M563.500 330v5M567.500 330v5M536 354.500h20M536 360.500h20M536 366.500h20M569 360.500h20M590 343.500h15M590 350.500h15M590 370.500h15M590 377.500h15M550.500 378v14M553.500 378v14M586.500 378v14M589.500 378v14M570.500 386v10M603.500 333v56M605.500 333v56M539 391.500h61M539 394.500h61M539.500 389v6M599.500 389v6" />
      <path d="M602 333.500h4M602 388.500h4" />
    </g>

    {/* cursor */}
    <path d="M934.500 365v29M934.500 403v30M900 398.500h30M939 398.500h29M930.500 394.500h8v8h-8zM932.500 398.500h4M934.500 396.500v4" stroke="#fff" opacity=".9" />
  </svg>
)

const arrow = 'flex h-4 w-4 shrink-0 items-center justify-center'
const Tri = ({ d }: { d: string }) => (
  <svg viewBox="0 0 8 8" className="h-2 w-2"><path d={d} fill="#333" /></svg>
)
const UP = 'M1 6h6L4 2z'
const DOWN = 'M1 2h6L4 6z'
const LEFT = 'M6 1v6L2 4z'
const RIGHT = 'M2 1v6l4-4z'

const SheetTabs = () => {
  const [sheetName, setSheetName] = useState('Модель')
  return (
    <div className="flex h-5 shrink-0 items-center bg-[#f0f0f0] font-['Liberation_Sans'] text-[11px] text-black">
      <button aria-label="Назад" className={clsx(arrow, 'ml-0.5')}><Tri d={LEFT} /></button>
      <button aria-label="Вперёд" className={clsx(arrow, 'ml-0.5')}><Tri d={RIGHT} /></button>
      <div role="tablist" className="flex h-full items-start">
        {['Модель', 'Лист1', 'Лист2', 'A4', 'A3', 'A2', 'A1', 'A0'].map((name, i) => (
          <button
            key={name}
            role="tab"
            aria-selected={name === sheetName}
            onClick={() => setSheetName(name)}
            className={clsx('flex h-[18px] items-center', name === sheetName && 'bg-white font-bold')}
          >
            {i === 0 && <svg viewBox="0 0 8 18" className="h-[18px] w-2 bg-[#f0f0f0]"><path d="M0 0h8v18H6z" fill="#fff" /><path d="M0 0l6 18" stroke="#444" /></svg>}
            <span className="border-b border-[#444] pt-px pr-[3px] pl-0.5 leading-4">{name}</span>
            <svg viewBox="0 0 9 18" className="h-[18px] w-[9px] bg-[#f0f0f0]">
              {name === sheetName && <path d="M0 0h8L2 18H0z" fill="#fff" />}
              <path d="M8 0L2 17.500H0" fill="none" stroke="#444" />
            </svg>
          </button>
        ))}
      </div>
      <div className="ml-auto flex h-full w-[688px] items-center">
        <button aria-label="Разделить" className="mr-1 flex h-[18px] w-5 items-center border-r-2 border-[#555]">
          <svg viewBox="0 0 17 16" className="h-4 w-[17px]">
            <rect x=".5" y=".5" width="16" height="15" rx="2" fill="#fff" stroke="#333" />
            <path d="M2 6h13" stroke="#4ba2dc" strokeWidth="3" />
            <path d="M2 10.500h13M2 13h13" stroke="#9aa" />
          </svg>
        </button>
        <button aria-label="Влево" className={arrow}><Tri d={LEFT} /></button>
        <div className="flex h-full flex-1 items-center justify-end pr-32">
          <div className="flex h-[15px] w-[187px] items-center justify-center gap-0.5 rounded-xs border border-[#8a8a8a] bg-linear-to-b from-[#f6f6f6] to-[#cfcfcf]">
            <i className="h-[7px] w-px bg-[#444]" />
            <i className="h-[7px] w-px bg-[#444]" />
            <i className="h-[7px] w-px bg-[#444]" />
          </div>
        </div>
        <button aria-label="Вправо" className={arrow}><Tri d={RIGHT} /></button>
        <svg viewBox="0 0 20 20" className="h-5 w-5"><path d="M8 19L19 8M12 19l7-7M16 19l3-3" stroke="#888" /></svg>
      </div>
    </div>
  )
}

const Document = () => (
  <section className="flex min-h-0 flex-1 flex-col">
    <div className="flex h-[21px] shrink-0 items-end bg-linear-to-b from-[#a9cbf9] to-[#dfecff] pl-1">
      <div role="tablist" className="flex">
        <button role="tab" aria-selected="true" className="flex h-[19px] items-center font-['Roboto'] text-[11px] font-bold text-[#0b1f66]">
          <svg viewBox="0 0 20 19" className="h-[19px] w-5"><path d="M0 19C8 18 8 0 20 0v19z" fill="#fff" /></svg>
          <span className="flex h-full items-center bg-white">заготовка тест драйв опалубка.dwg*</span>
          <span className="flex h-full items-center rounded-tr bg-white pr-1.5 pl-4">
            <svg viewBox="0 0 8 8" className="h-2 w-2"><path d="M0 0l8 8M8 0L0 8" stroke="#54779f" strokeWidth="1.200" /></svg>
          </span>
        </button>
      </div>
      <button aria-label="Список документов" className="mr-[5px] mb-1 ml-auto">
        <svg viewBox="0 0 10 8" className="h-2 w-2.5"><path d="M0 1h10L5 7z" fill="#3f6bab" /></svg>
      </button>
    </div>
    <div className="ml-[3px] flex min-h-0 flex-1 flex-col border-t-2 border-r-2 border-b-4 border-l-2 border-t-[#8a8f96] border-r-white border-b-white border-l-[#8a8f96]">
      <div className="flex min-h-0 flex-1">
        <div className="relative min-w-0 flex-1 overflow-hidden bg-black">
          <Drawing />
          <SpecTable />
          <LoadTable />
          <SteelTable />
        </div>
        <div className="flex w-[17px] shrink-0 flex-col items-center bg-[#f0f0f0]">
          <button aria-label="Вверх" className={arrow}><Tri d={UP} /></button>
          <span className="flex-[146]" />
          <div className="flex h-[102px] w-[15px] flex-col items-center justify-center gap-0.5 rounded-xs border border-[#8a8a8a] bg-linear-to-r from-[#f6f6f6] to-[#cfcfcf]">
            <i className="h-px w-[7px] bg-[#444]" />
            <i className="h-px w-[7px] bg-[#444]" />
            <i className="h-px w-[7px] bg-[#444]" />
          </div>
          <span className="flex-[165]" />
          <button aria-label="Вниз" className={arrow}><Tri d={DOWN} /></button>
        </div>
      </div>
      <SheetTabs />
    </div>
  </section>
)

const autosave = 'Автосохранение: C:\\Users\\KOPCHE~1\\AppData\\Local\\Temp\\заготовка тест драйв опалубка.dwg(11-41-07_06.11.2013).autosave'

const CommandPanel = () => (
  <section className="mt-[5px] ml-0.5 flex h-[70px] shrink-0 font-['DejaVu_Sans_Mono'] text-xs text-black">
    <div className="flex w-4 shrink-0 flex-col items-center bg-[#a9c7ef] pt-1.5 text-[#15428b]">
      <button aria-label="Закрыть панель">
        <svg viewBox="0 0 8 8" className="h-2 w-2"><path d="M0 0l8 8M8 0L0 8" stroke="#54779f" strokeWidth="1.200" /></svg>
      </button>
      <button aria-label="Закрепить" className="mt-2.5">
        <svg viewBox="0 0 10 8" className="h-2 w-2.5"><path d="M2.500 0v4M7.500 0v4M3 .5h4M0 4.500h10M5 4v4M6.500 0v4" fill="none" stroke="#54779f" /></svg>
      </button>
      <span className="mt-auto mb-0.5 rotate-180 font-['DejaVu_Sans'] text-[9px] leading-4 [writing-mode:vertical-rl]">Коман</span>
    </div>
    <div className="flex min-w-0 flex-1 flex-col border-t-2 border-l border-[#6e7074]">
      <div className="flex min-h-0 flex-1 bg-[#f0f0f0]">
        <div className="flex min-w-0 flex-1 flex-col justify-end overflow-hidden pb-px pl-0.5 leading-[14px] whitespace-nowrap">
          <p>1 найдено</p>
          <p>format - Форматы</p>
          <p>{autosave}</p>
          <p>{autosave}</p>
        </div>
        <div className="flex w-[17px] flex-col justify-between">
          <button aria-label="Прокрутить вверх" className={arrow}><Tri d={UP} /></button>
          <button aria-label="Прокрутить вниз" className={arrow}><Tri d={DOWN} /></button>
        </div>
      </div>
      <label className="flex h-[17px] shrink-0 items-center border-t border-[#6e7074] bg-white pl-px">
        Команда:
        <input className="min-w-0 flex-1 bg-transparent pl-1 outline-none" />
      </label>
    </div>
  </section>
)

const modes: [string, string][] = [
  ['ШАГ', 'w-8'],
  ['СЕТКА', 'w-10'],
  ['оПРИВЯЗКА', 'w-[71px]'],
  ['ОТС-ОБЪЕКТ', 'w-[74px]'],
  ['ОТС-ПОЛЯР', 'w-[71px]'],
  ['ОРТО', 'w-[38px]'],
  ['ВЕС', 'w-[29px]'],
  ['ШТРИХОВКА', 'w-[74px]'],
]

const StatusBar = () => {
  const [on, setOn] = useState(['оПРИВЯЗКА', 'ОТС-ОБЪЕКТ', 'ВЕС', 'ШТРИХОВКА'])
  const toggle = (name: string) => setOn(on.includes(name) ? on.filter((m) => m !== name) : [...on, name])

  return (
    <footer className="flex h-6 shrink-0 items-center border-t border-[#5d8cc9] bg-linear-to-b from-[#d6e6fb] via-[#aecbf2] to-[#bcd6f8] font-['Noto_Sans'] text-[11px]">
      <span className="w-[213px] shrink-0 pl-0.5 text-[#15428b]">129668,26266,0</span>
      <div className="flex gap-px border-x border-[#8fb2e0] px-px">
        {modes.map(([name, width]) => (
          <button
            key={name}
            aria-pressed={on.includes(name)}
            onClick={() => toggle(name)}
            className={clsx(
              'flex h-5 shrink-0 items-center justify-center border whitespace-nowrap text-[#111]',
              width,
              on.includes(name) ? 'border-[#a48a5c] bg-linear-to-b from-[#f5c88c] via-[#fbd195] to-[#ffc864]' : 'border-[#7b9fd0] bg-linear-to-b from-[#e6f0fd] to-[#d4e5fb]',
            )}
          >
            {name}
          </button>
        ))}
      </div>
      <div className="ml-auto flex h-full items-center gap-0.5 border-l border-[#6d98d2] bg-[#a4c4ee] pr-[19px] pl-1.5">
        <button aria-label="Вес линий" className="flex h-5 w-5 items-center justify-center border border-[#6c8fb8] bg-[#3a9fd4]">
          <svg viewBox="0 0 16 16" className="h-4 w-4" fill="none" stroke="#fff"><path d="M1 16V8q0-5 5-5h10M5 16v-6q0-3 3-3h8M9 16v-3q0-2 2-2h5" /></svg>
        </button>
        <button aria-label="Сетка" className="flex h-5 w-5 items-center justify-center border border-[#6c8fb8] bg-[#dbe9f7]">
          <svg viewBox="0 0 16 16" className="h-4 w-4" fill="none"><path d="M2 2h12v12H2zM6 2v12M10 2v12M2 6h12M2 10h12" stroke="#2a9cc9" /><path d="M3 3v10h9z" fill="#fff" stroke="#333" /></svg>
        </button>
        <button className="flex h-5 w-[69px] items-center justify-center border border-[#7b9fd0] bg-linear-to-b from-[#e6f0fd] to-[#d3e4fb] text-black">m1:100</button>
        {['pan', 'zoom', 'zoomall', 'zoomobj', 'regen', 'screen'].map((name) => (
          <span key={name} className="flex h-5 w-5 items-center justify-center border border-[#7b9fd0] bg-[#e0ecfb]">
            <Tool name={name} small />
          </span>
        ))}
        <svg viewBox="0 0 10 10" className="-mr-4 ml-px h-2.5 w-2.5 self-end"><path d="M8 0h2v2H8zM8 4h2v2H8zM4 4h2v2H4zM0 8h2v2H0zM4 8h2v2H4zM8 8h2v2H8z" fill="#4d78b6" /></svg>
      </div>
    </footer>
  )
}

const apps: { name: string; state?: 'open' | 'active'; art: ReactNode }[] = [
  { name: 'Проводник', art: <><path d="M3 4h10l2 3h14v21H3z" fill="#f1d98a" stroke="#b9983e" /><path d="M6 3h5v4H6z" fill="#4aa54a" /><path d="M13 4h5v4h-5z" fill="#d44" /><path d="M3 10h26v18H3z" fill="#fae9ac" /><path d="M7 31v-9q0-3 3-3h12q3 0 3 3v9h-4v-7H11v7z" fill="#9fd0ea" stroke="#5d97ba" /></> },
  { name: 'Internet Explorer', art: <><path d="M27 18H11c0 7 8 8 11 4l5 1c-5 9-22 9-22-6C5 3 28 1 27 18zM11 13.500h10c-1-6-9-6-10 0z" fill="#3fb4ee" stroke="#1c78b8" strokeWidth=".6" /><path d="M3 28C-2 20 12 4 24 2c6-1 6 3 3 8 1-6-3-6-8-3C10 12 3 22 5 26c1 2 5 1 8-1-3 4-8 6-10 3z" fill="#f2c230" /></> },
  { name: 'Chrome', state: 'open', art: <><circle cx="16" cy="16" r="14" fill="#4caf50" /><path d="M4 9A14 14 0 0 1 29.500 11H16z" fill="#e2352a" /><path d="M4 9l8 13 4-6V10z" fill="#e2352a" /><path d="M29.500 11H17l4 8-7 11A14 14 0 0 0 29.500 11z" fill="#f9cf2a" /><path d="M3.800 9A14 14 0 0 0 14 30l5-9-7 0z" fill="#3fa548" /><circle cx="16" cy="16" r="6.500" fill="#fff" /><circle cx="16" cy="16" r="5" fill="#3a7ee0" /></> },
  { name: 'Яндекс', art: <><path d="M1 2h24l6 14-6 14H1z" fill="#f4f4f4" stroke="#c4c4c4" /><text x="6" y="25" fontSize="25" fill="#e01515" stroke="#e01515" fontFamily="Liberation Sans">Я</text></> },
  { name: 'Звук', art: <><path d="M1 2h24l6 14-6 14H1z" fill="#6ea5da" stroke="#a8c9ea" /><path d="M5 13h4l6-5v17l-6-5H5z" fill="#fff" /><path d="M18 12q3 4 0 8M21 9q6 7 0 14" fill="none" stroke="#fff" strokeWidth="2" /></> },
  { name: 'Outlook', art: <><path d="M2 2h28v28H2z" fill="#f6b941" /><path d="M2 2h28v14L2 26z" fill="#fbd98a" /><path d="M10 19l10 5 10-5v11H10z" fill="#fff1cf" stroke="#e0a94a" /><ellipse cx="11" cy="12" rx="5" ry="7" fill="#fbe3ae" stroke="#d07810" strokeWidth="4.500" /><circle cx="26" cy="13" r="5" fill="#fff" stroke="#d08a1a" /><path d="M25 10v3h3" stroke="#a55" fill="none" /></> },
  { name: 'Media Player', art: <><path d="M8 4h19v24H10z" fill="#5aa4d8" stroke="#cfe5f4" /><path d="M3 5h20v23H3z" fill="#9ccbe8" stroke="#3c7fae" /><circle cx="13" cy="17" r="8.500" fill="#f0801c" stroke="#fff" /><path d="M10 11l9 6-9 6z" fill="#fff" /></> },
  { name: 'Видеосвязь', art: <><path d="M12 3h19v17l-19 2z" fill="#1b3d88" stroke="#a8c8ee" /><circle cx="12" cy="10" r="5" fill="#e8b98f" /><path d="M7 9q0-6 6-5 5 1 4 6-3-4-10-1z" fill="#5b3b22" /><path d="M4 28c0-15 15-15 15 0z" fill="#9ccbe8" /><path d="M1 25c8 5 20 0 27-14-4 17-15 23-26 17z" fill="#f5d55c" /></> },
  { name: 'ICQ', art: <><g fill="#3cc221" stroke="#167d0a" strokeWidth=".6"><ellipse cx="12.500" cy="7" rx="4" ry="6" transform="rotate(-20 12.500 7)" /><ellipse cx="20" cy="7" rx="4" ry="6" transform="rotate(22 20 7)" /><ellipse cx="25.500" cy="12" rx="6" ry="4" transform="rotate(-22 25.500 12)" /><ellipse cx="25.500" cy="20" rx="6" ry="4" transform="rotate(22 25.500 20)" /><ellipse cx="20" cy="25.500" rx="4" ry="6" transform="rotate(-22 20 25.500)" /><ellipse cx="12" cy="25.500" rx="4" ry="6" transform="rotate(22 12 25.500)" /><ellipse cx="6.500" cy="12" rx="6" ry="4" transform="rotate(22 6.500 12)" /></g><ellipse cx="8" cy="19.500" rx="5" ry="3.500" fill="#e32222" transform="rotate(-22 8 19.500)" /><circle cx="16" cy="16" r="3.500" fill="#ffe23c" /></> },
  { name: 'Панель управления', state: 'open', art: <><path d="M0 4h32v22H0z" fill="#3b93d6" stroke="#9fd0f5" /><circle cx="9" cy="12" r="4.500" fill="#3b93d6" stroke="#dff0fb" strokeWidth="1.500" /><path d="M9 11V5a6 6 0 0 1 5 6z" fill="#f3b13e" /><path d="M18 9h4v3h-4zM24 9h4v3h-4zM18 15h4v3h-4zM24 15h4v3h-4z" fill="#3b93d6" stroke="#dff0fb" /><path d="M5 21h3M10 21h3" stroke="#f6d04d" strokeWidth="2" /><path d="M9 31q0-8 7-8t7 8z" fill="#e2e2e2" /></> },
  { name: 'nanoCAD', state: 'active', art: <CubeArt /> },
  { name: 'Skype', state: 'open', art: <><circle cx="10" cy="10" r="9" fill="#0da2e3" /><circle cx="22" cy="22" r="9" fill="#0da2e3" /><circle cx="16" cy="16" r="13" fill="#0da2e3" /><text x="9" y="23" fontSize="21" fontWeight="bold" fill="#fff" fontFamily="Liberation Sans">S</text></> },
]

const Taskbar = () => (
  <div className="flex h-10 shrink-0 items-center border-t border-[#55555a] bg-linear-to-b from-[#17171b] via-[#08080a] to-[#050507] font-['Noto_Sans'] text-[11px] text-white">
    <button aria-label="Пуск" className="mr-1 ml-2 h-[38px] w-[38px] shrink-0">
      <svg viewBox="0 0 38 38" className="h-full w-full">
        <defs>
          <radialGradient id="orb" cx=".5" cy=".95" r=".9">
            <stop offset="0" stopColor="#55d3f5" />
            <stop offset=".5" stopColor="#1f6eac" />
            <stop offset="1" stopColor="#173f6e" />
          </radialGradient>
        </defs>
        <circle cx="19" cy="19" r="18" fill="url(#orb)" stroke="#8fb6d1" />
        <path d="M4 14a16 16 0 0 1 30 0q-15-7-30 0z" fill="#fff" opacity=".35" />
        <path d="M9 11q5-3 9-1l-1 8q-5-2-9 1z" fill="#f0602b" />
        <path d="M20 11q4 2 9-1l-1 8q-5 3-9 1z" fill="#8cc63e" />
        <path d="M8 21q5-3 9-1l-1 8q-5-2-9 1z" fill="#3c9fe0" />
        <path d="M19 21q4 2 9-1l-1 8q-5 3-9 1z" fill="#fcc62c" />
      </svg>
    </button>
    <div className="ml-2.5 flex h-full gap-1">
      {apps.map(({ name, state, art }) => (
        <button
          key={name}
          aria-label={name}
          className={clsx(
            'flex h-full w-[58px] items-center justify-center rounded-sm border',
            !state && 'border-transparent',
            state === 'open' && 'border-[#7c7c80] bg-linear-to-br from-[#77777b] via-[#2b2b2e] to-[#1d1d20]',
            state === 'active' && 'border-[#d8d8d8] bg-linear-to-br from-[#dcdcdc] via-[#9a9a9c] to-[#77777a]',
          )}
        >
          <svg viewBox="0 0 32 32" className="h-8 w-8">{art}</svg>
        </button>
      ))}
    </div>
    <div className="ml-auto flex h-full items-center">
      <span className="mr-4">RU</span>
      <svg viewBox="0 0 8 8" className="mr-3.5 h-2 w-2"><path d="M0 6h8L4 2z" fill="#fff" /></svg>
      <svg viewBox="0 0 16 16" className="mr-2.5 h-4 w-4" fill="none" stroke="#fff">
        <path d="M2 3h7v12H2zM4 1h3" strokeWidth="1.500" /><path d="M8 5h6v4l-2 2h-2L8 9z" fill="#fff" /><path d="M9.500 2v3M12.500 2v3M11 11v4H8" />
      </svg>
      <svg viewBox="0 0 16 16" className="mr-2 h-4 w-4" fill="none" stroke="#fff">
        <path d="M5 4h10v8H5zM8 15h6M11 12v3" strokeWidth="1.300" /><path d="M1 1h4v4H1zM3 5v9h4" />
      </svg>
      <svg viewBox="0 0 16 16" className="mr-3 h-4 w-4">
        <path d="M2 6h2l5-4v12l-5-4H2z" fill="#fff" /><path d="M11 5q2 3 0 6" fill="none" stroke="#fff" />
      </svg>
      <time className="w-[68px] text-center leading-4">
        12:04
        <br />
        06.11.2013
      </time>
      <button aria-label="Показать рабочий стол" className="ml-1 h-full w-[13px] border border-[#55555a] bg-linear-to-br from-[#55555a] to-[#0d0d10]" />
    </div>
  </div>
)

export default function App() {
  return (
    <div className="flex h-screen flex-col overflow-hidden bg-black">
      <div className="flex min-h-0 flex-1 flex-col rounded-t-md border border-[#e8e8e8] bg-[#b2b2b2] p-1.5">
        <div className="flex min-h-0 flex-1 flex-col border border-white bg-[#bfdbff]">
          <TitleBar />
          <Ribbon />
          <main className="flex min-h-0 flex-1">
            <aside className="w-6 shrink-0 pt-[22px] pl-px">
              <div role="toolbar" className="flex flex-col items-center rounded-md border-r border-[#6f9dd9] bg-linear-to-r from-[#e1edff] to-[#b9d4fa] pb-2">
                <Handle column />
                <Tools column names="line ray* pline polygon rect* arc* circle* | cloud spline ellipse* | hatch* | block* insert* | point* | table mtext*" />
              </div>
            </aside>
            <div className="flex min-w-0 flex-1 flex-col pr-[3px]">
              <Document />
              <CommandPanel />
            </div>
            <aside className="w-6 shrink-0 pr-px">
              <div role="toolbar" className="flex flex-col items-center rounded-md border-r border-[#6f9dd9] bg-linear-to-r from-[#e1edff] to-[#b9d4fa] pb-0.5">
                <Handle column />
                <Tools column names="erase mirror offset contour array | move rotate | scale stretch | trim extend lengthen break1 break2 join | chamfer fillet | bomb purge" />
              </div>
              <div role="toolbar" className="flex flex-col items-center rounded-md border-r border-[#6f9dd9] bg-linear-to-r from-[#e1edff] to-[#b9d4fa] pb-0.5">
                <Handle column />
                <Tools column names="front back above below" />
              </div>
            </aside>
          </main>
          <StatusBar />
        </div>
      </div>
      <Taskbar />
    </div>
  )
}
